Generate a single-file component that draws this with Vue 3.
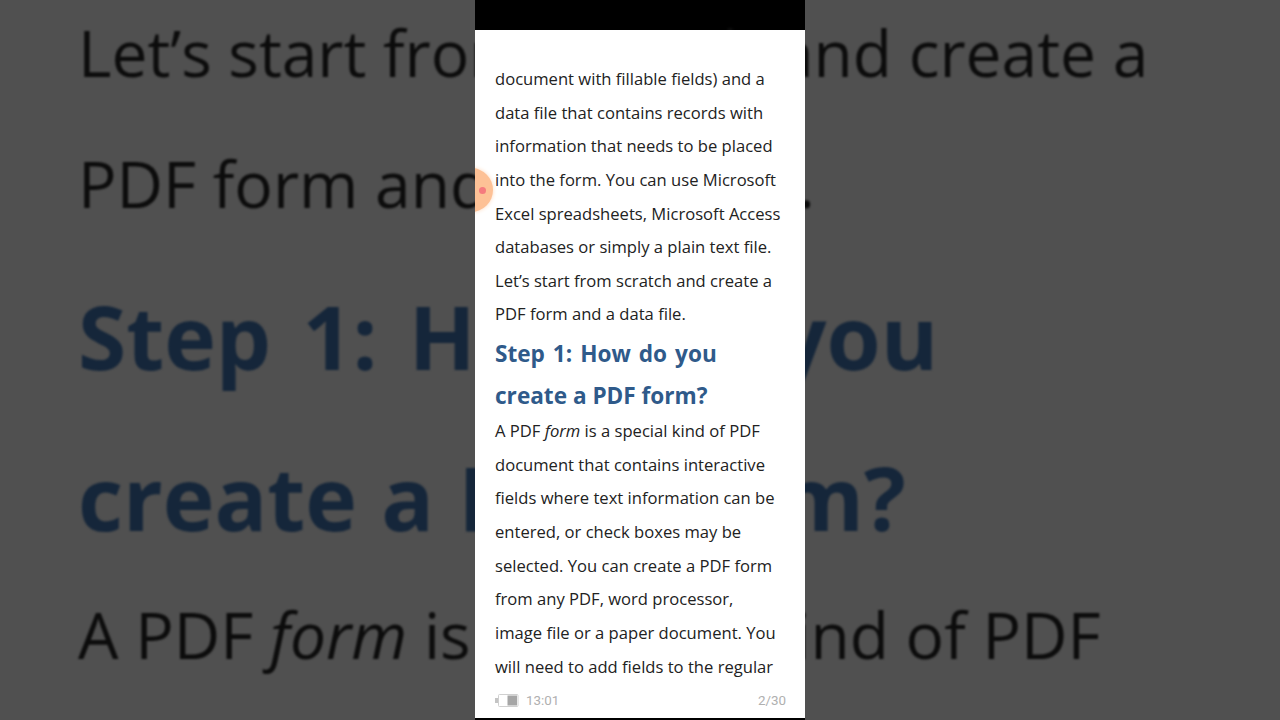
<script setup>
const bgBody = ["Let’s start from scratch and create a", "PDF form and a data file."];
const before = [
  "document with fillable fields) and a",
  "data file that contains records with",
  "information that needs to be placed",
  "into the form. You can use Microsoft",
  "Excel spreadsheets, Microsoft Access",
  "databases or simply a plain text file.",
  "Let’s start from scratch and create a",
  "PDF form and a data file.",
];
const after = [
  "document that contains interactive",
  "fields where text information can be",
  "entered, or check boxes may be",
  "selected. You can create a PDF form",
  "from any PDF, word processor,",
  "image file or a paper document. You",
  "will need to add fields to the regular",
];
</script>

<template>
  <div class="stage">
    <div class="backdrop">
      <div v-for="l in bgBody" :key="l" class="bg-body">{{ l }}</div>
      <div class="bg-head wide">Step 1: How do you</div>
      <div class="bg-head">create a PDF form?</div>
      <div class="bg-body">A PDF <em>form</em> is a special kind of PDF</div>
    </div>
    <div class="front">
      <div class="phone">
        <div class="page">
          <div class="doc">
            <div v-for="l in before" :key="l" class="line">{{ l }}</div>
            <h2 class="heading">
              <span class="head-line wide">Step 1: How do you</span>
              <span class="head-line">create a PDF form?</span>
            </h2>
            <div class="line">A PDF <em>form</em> is a special kind of PDF</div>
            <div v-for="l in after" :key="l" class="line">{{ l }}</div>
          </div>
          <div class="status">
            <div class="status-left">
              <svg class="battery" width="24" height="13" viewBox="0 0 24 13">
                <rect x="0" y="4" width="3" height="5" fill="#c4c4c4" />
                <rect x="3.5" y="0.5" width="19.5" height="12" rx="1" fill="#fff" stroke="#d0d0d0" stroke-width="1" />
                <rect x="12.5" y="1.5" width="9.5" height="10" fill="#a6a6a6" />
              </svg>
              <span>13:01</span>
            </div>
            <span>2/30</span>
          </div>
          <div class="touch"></div>
          <div class="touch-dot"></div>
        </div>
      </div>
    </div>
  </div>
</template>

<style scoped>
.stage {
  display: grid;
  width: 1280px;
  height: 720px;
  overflow: hidden;
  background: #505050;
}
.backdrop,
.front {
  grid-area: 1 / 1;
  min-width: 0;
}
.backdrop {
  padding-left: 78px;
  margin-top: -13px;
  font-family: "Open Sans", "Noto Sans", sans-serif;
  white-space: nowrap;
  filter: blur(0.9px);
}
.bg-body {
  height: 130.5px;
  line-height: 130.5px;
  font-size: 64.1px;
  color: #0c0c0c;
}
.bg-head {
  box-sizing: border-box;
  height: 160.5px;
  padding-top: 8px;
  line-height: 160.5px;
  font-size: 87.5px;
  font-weight: 700;
  word-spacing: 1.5px;
  color: #15263a;
}
.bg-head.wide {
  word-spacing: 8.5px;
}
.front {
  display: flex;
  justify-content: center;
}
.phone {
  width: 330px;
  height: 720px;
  display: flex;
  flex-direction: column;
  background: #000;
  padding: 30px 0 2px;
  box-sizing: border-box;
}
.page {
  position: relative;
  flex: 1;
  background: #fff;
  overflow: hidden;
  display: flex;
  flex-direction: column;
}
.doc {
  flex: 1;
  min-height: 0;
  overflow: hidden;
  padding: 32px 0 0 20px;
  font-family: "Open Sans", "Noto Sans", sans-serif;
  white-space: nowrap;
}
.line {
  height: 33.65px;
  line-height: 33.65px;
  font-size: 16.6px;
  color: #222;
}
.heading {
  margin: 2px 0 -2px;
  font-size: 22.6px;
  line-height: 41.5px;
  font-weight: 700;
  color: #2f5a8a;
}
.head-line {
  display: block;
}
.head-line.wide {
  word-spacing: 2.1px;
}
.status {
  height: 36px;
  padding: 0 19px 0 20px;
  display: flex;
  align-items: center;
  justify-content: space-between;
  font-family: Roboto, sans-serif;
  font-size: 13.4px;
  color: #b0b0b0;
}
.status-left {
  display: flex;
  align-items: center;
  gap: 7px;
}
.touch {
  position: absolute;
  left: -26px;
  top: 138px;
  width: 44px;
  height: 44px;
  border-radius: 50%;
  background: #fdc196;
  box-shadow: 0 0 4px #fdd9bd;
}
.touch-dot {
  position: absolute;
  left: 4px;
  top: 157px;
  width: 7px;
  height: 7px;
  border-radius: 50%;
  background: #f57a7e;
}
</style>
